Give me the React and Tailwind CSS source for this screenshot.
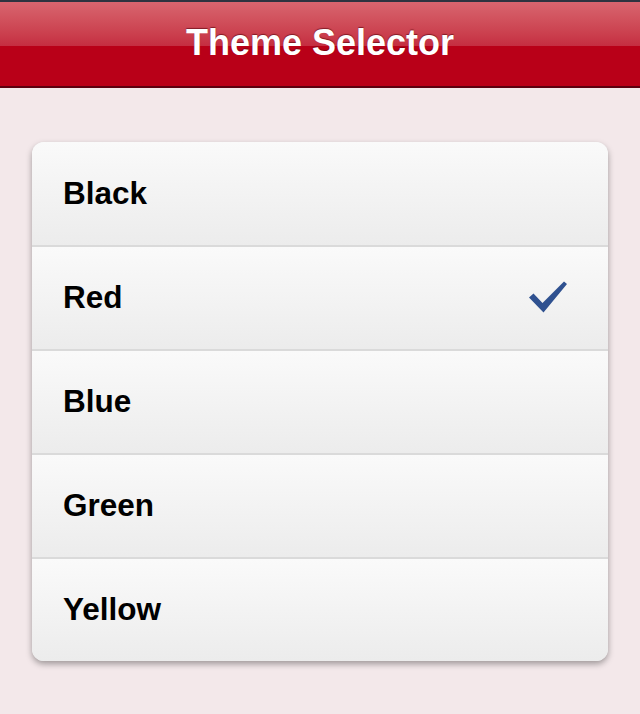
import React, { useState } from 'react';

const themes = ['Black', 'Red', 'Blue', 'Green', 'Yellow'];

const CheckMark = () => (
  <svg width="40" height="34" viewBox="0 0 40 34" className="block">
    <path d="M0 16.5 L4.5 12.5 L13.5 22 L35 0.5 L38 3 L14.5 31.5 Z" fill="#2f5190" />
  </svg>
);

const App = () => {
  const [selected, setSelected] = useState('Red');

  return (
    <div className="min-h-[714px] w-[640px] bg-[#f3e8ea]" style={{ fontFamily: '"Liberation Sans", Arial, sans-serif' }}>
      <div className="h-[2px] bg-[#2d3340]" />
      <header className="relative h-[86px] bg-[#b90018] border-b-2 border-[#5c000f]">
        <div className="absolute inset-x-0 top-0 h-[44px] bg-gradient-to-b from-[#d8656f] to-[#c52d41]" />
        <h1 className="relative flex h-full items-center justify-center pb-[2px] text-[36px] font-bold text-white [text-shadow:0_-1px_1px_rgba(80,0,10,0.6)]">
          Theme Selector
        </h1>
      </header>

      <div className="px-8 pt-[54px]">
        <ul className="overflow-hidden rounded-[12px] bg-[#f2f2f2] shadow-[0_3px_6px_rgba(0,0,0,0.35)]">
          {themes.map((name, i) => (
            <li
              key={name}
              onClick={() => setSelected(name)}
              className={`flex cursor-pointer items-center justify-between bg-gradient-to-b from-[#fafafa] to-[#ececec] pl-[31px] pr-[39px] ${i > 0 ? 'h-[104px] border-t-2 border-[#dadada]' : 'h-[103px]'}`}
            >
              <span className="text-[31.5px] font-bold text-black">{name}</span>
              {selected === name && <CheckMark />}
            </li>
          ))}
        </ul>
      </div>
    </div>
  );
};

export default App;
